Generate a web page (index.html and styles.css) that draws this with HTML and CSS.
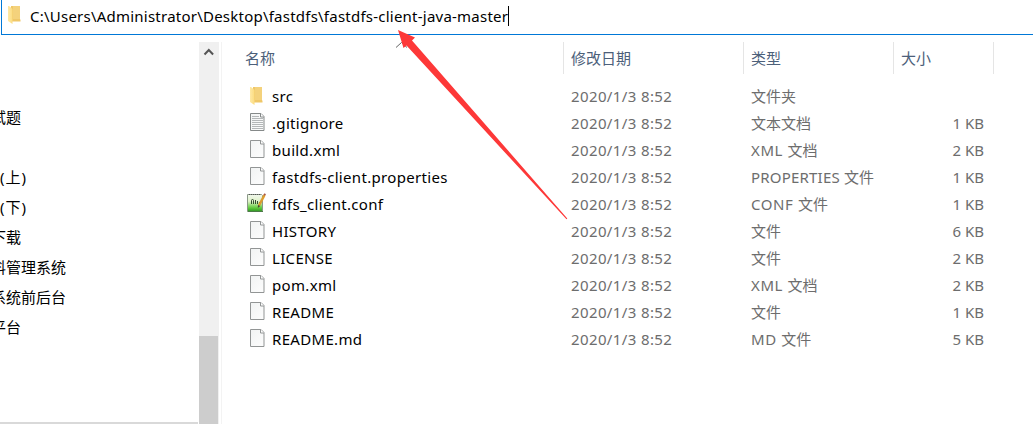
FILE: index.html
```html
<!DOCTYPE html>
<html lang="zh-CN">
<head>
<meta charset="utf-8">
<title>fastdfs-client-java-master</title>
<link rel="stylesheet" href="styles.css">
</head>
<body>
<svg class="defs" aria-hidden="true">
  <defs>
    <linearGradient id="paper" x1="0" y1="0" x2="1" y2="1"><stop offset="0" stop-color="#f1f3f3"/><stop offset="1" stop-color="#fdfdfd"/></linearGradient>
    <linearGradient id="gold" x1="0" y1="0" x2="1" y2="0"><stop offset="0" stop-color="#ffe9a6"/><stop offset="1" stop-color="#fbdc80"/></linearGradient>
    <linearGradient id="green" x1="0" y1="0" x2="0" y2="1"><stop offset="0" stop-color="#f2f7ee"/><stop offset=".4" stop-color="#e0f3c9"/><stop offset=".8" stop-color="#5dc93a"/><stop offset="1" stop-color="#2f9426"/></linearGradient>
    <symbol id="folder" viewBox="0 0 13 18"><path d="M3 0h9v13l.5 1v1.500H3z" fill="#efc768"/><path d="M5 0h7v13H5z" fill="#f4d27c"/><path d="M0 0h1l3.500 3v15L0 15z" fill="url(#gold)"/></symbol>
    <symbol id="file" viewBox="0 0 15 18"><path d="M.5.5h10.500l3 3v14H.5z" fill="url(#paper)" stroke="#929595"/><path d="M10.500.5v3.500H14" fill="#fff" stroke="#929595"/></symbol>
    <symbol id="text" viewBox="0 0 15 18"><path d="M.5.5h10.500l3 3v14H.5z" fill="url(#paper)" stroke="#858989"/><path d="M10.500.5v3.500H14" fill="#fff" stroke="#858989"/><path d="M2 3.500h7M2 5.500h11M2 7.500h11M2 9.500h11M2 11.500h11M2 13.500h11M2 15.500h11" stroke="#b4b7b8"/></symbol>
    <symbol id="conf" viewBox="0 0 19 20"><path d="M.5 1.500h14l1 1v16H.5z" fill="url(#green)" stroke="#8b9988"/><path d="M2 1.500h1m1 0h1m1 0h1m1 0h1m1 0h1m1 0h1" stroke="#555"/><path d="M1 18.500h15" stroke="#4c7a47"/><path d="M4.500 11V7.500q0-1 1-1t1 1V11m2-4v4m2-3v3m2-2v1" fill="none" stroke="#344d31"/><path d="M17.500 2 12 12.500" stroke="#dc9c2f" stroke-width="2.500"/><path d="m17 1 1.500 1" stroke="#aa5745" stroke-width="2"/><path d="m11 12-.2 3 2.400-2z" fill="#514332"/></symbol>
  </defs>
</svg>
<div class="window">
  <header class="address"><svg class="address-icon"><use href="#folder"/></svg><span class="path">C:\Users\Administrator\Desktop\fastdfs\fastdfs-client-java-master</span><i class="caret"></i></header>
  <div class="content">
    <nav class="sidebar">
      <ul class="tree">
        <li class="cut">试题</li><li></li><li class="volume">(上)</li><li class="volume">(下)</li><li class="cut">下载</li><li class="cut">料管理系统</li><li class="cut">系统前后台</li><li class="cut">平台</li>
      </ul>
      <div class="tree-end"></div>
    </nav>
    <div class="scrollbar"><svg class="scroll-up" viewBox="0 0 20 20"><path d="m5.500 12.500 4.300-4.500 4.300 4.500" fill="none" stroke="#555" stroke-width="2"/></svg><div class="thumb"></div></div>
    <main class="files">
      <div class="head"><div>名称</div><div>修改日期</div><div>类型</div><div>大小</div></div>
      <div class="row"><svg class="icon folder"><use href="#folder"/></svg><span class="name">src</span><span class="date">2020/1/3 8:52</span><span class="type">文件夹</span><span class="size"></span></div>
      <div class="row"><svg class="icon"><use href="#text"/></svg><span class="name">.gitignore</span><span class="date">2020/1/3 8:52</span><span class="type">文本文档</span><span class="size">1 KB</span></div>
      <div class="row"><svg class="icon"><use href="#file"/></svg><span class="name">build.xml</span><span class="date">2020/1/3 8:52</span><span class="type"><span class="ext">XML </span>文档</span><span class="size">2 KB</span></div>
      <div class="row"><svg class="icon"><use href="#file"/></svg><span class="name">fastdfs-client.properties</span><span class="date">2020/1/3 8:52</span><span class="type"><span class="ext long">PROPERTIES </span>文件</span><span class="size">1 KB</span></div>
      <div class="row"><svg class="icon conf"><use href="#conf"/></svg><span class="name">fdfs_client.conf</span><span class="date">2020/1/3 8:52</span><span class="type"><span class="ext">CONF </span>文件</span><span class="size">1 KB</span></div>
      <div class="row"><svg class="icon"><use href="#file"/></svg><span class="name">HISTORY</span><span class="date">2020/1/3 8:52</span><span class="type">文件</span><span class="size">6 KB</span></div>
      <div class="row"><svg class="icon"><use href="#file"/></svg><span class="name">LICENSE</span><span class="date">2020/1/3 8:52</span><span class="type">文件</span><span class="size">2 KB</span></div>
      <div class="row"><svg class="icon"><use href="#file"/></svg><span class="name">pom.xml</span><span class="date">2020/1/3 8:52</span><span class="type"><span class="ext">XML </span>文档</span><span class="size">2 KB</span></div>
      <div class="row"><svg class="icon"><use href="#file"/></svg><span class="name">README</span><span class="date">2020/1/3 8:52</span><span class="type">文件</span><span class="size">1 KB</span></div>
      <div class="row"><svg class="icon"><use href="#file"/></svg><span class="name">README.md</span><span class="date">2020/1/3 8:52</span><span class="type"><span class="ext">MD </span>文件</span><span class="size">5 KB</span></div>
    </main>
  </div>
  <svg class="annotation" viewBox="0 0 1033 424"><path d="m396 47.500 5.500-5 5.500 5" fill="none" stroke="#666"/><path d="m398 30 17 7.500-3 3L567.300 218.500l-.8.8L406.500 45.500l-3 2.500z" fill="#fd3838"/></svg>
</div>
</body>
</html>
```
FILE: styles.css
```css
* { box-sizing: border-box; }
body { margin: 0; overflow: hidden; background: #fff; color: #000; font: 15px "Noto Sans", "Noto Sans CJK SC", sans-serif; }
.defs { position: absolute; width: 0; height: 0; }
.window { position: relative; width: 1033px; height: 424px; display: flex; flex-direction: column; overflow: hidden; }
.address { height: 35px; margin-left: 1px; padding: 0 0 3px 6px; border-left: 1px solid #0078d7; border-bottom: 1px solid #0078d7; display: flex; align-items: center; white-space: nowrap; }
.address-icon { width: 13px; height: 18px; margin: 0 9px 2px 0; }
.path { width: 478px; letter-spacing: .23px; }
.caret { width: 1px; height: 20px; background: #000; }
.content { flex: 1; display: flex; min-height: 0; }
.sidebar { width: 199px; display: flex; flex-direction: column; overflow: hidden; }
.tree { list-style: none; margin: 0; padding: 67px 0 0; }
.tree li { height: 30px; line-height: 30px; white-space: nowrap; }
.tree .cut { text-indent: -9px; }
.tree .volume { letter-spacing: 1px; }
.tree-end { width: 198px; height: 2px; margin-top: auto; background: #d9d9d9; }
.scrollbar { width: 20px; margin-top: 7px; background: #f0f0f0; display: flex; flex-direction: column; justify-content: space-between; }
.scroll-up { width: 20px; height: 20px; }
.thumb { width: 19px; height: 88px; background: #cdcdcd; }
.files { flex: 1; margin: 7px 0 0 2px; border-left: 1px solid #f3f3f3; }
.head { display: grid; grid-template-columns: 342px 180px 150px 100px; height: 41px; color: #4c607a; line-height: 32px; }
.head div { height: 32px; padding-left: 7px; border-right: 1px solid #e5e5e5; }
.head div:first-child { padding-left: 23px; }
.row { display: grid; grid-template-columns: 22px 299px 180px 150px 83px; padding-left: 28px; height: 27px; line-height: 27px; white-space: nowrap; color: #6d6d6d; }
.icon { width: 15px; height: 18px; margin-top: 3px; }
.icon.conf { width: 19px; height: 20px; margin: 2px 0 0 -3px; }
.icon.folder { width: 13px; height: 18px; margin-top: 4px; }
.name { color: #000; letter-spacing: .32px; }
.date { letter-spacing: .38px; }
.ext { letter-spacing: .6px; }
.ext.long { letter-spacing: .2px; }
.size { text-align: right; }
.annotation { position: absolute; inset: 0; width: 1033px; height: 424px; pointer-events: none; }
```
